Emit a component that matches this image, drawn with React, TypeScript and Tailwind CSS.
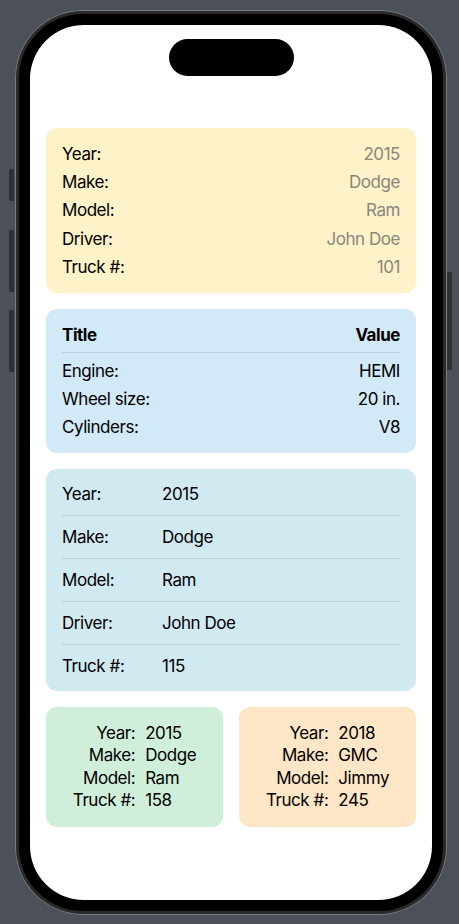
import React from "react";

const truck = [
  { label: "Year:", value: "2015" },
  { label: "Make:", value: "Dodge" },
  { label: "Model:", value: "Ram" },
  { label: "Driver:", value: "John Doe" },
  { label: "Truck #:", value: "101" },
];

const specs = [
  { label: "Engine:", value: "HEMI" },
  { label: "Wheel size:", value: "20 in." },
  { label: "Cylinders:", value: "V8" },
];

const listRows = [
  { label: "Year:", value: "2015" },
  { label: "Make:", value: "Dodge" },
  { label: "Model:", value: "Ram" },
  { label: "Driver:", value: "John Doe" },
  { label: "Truck #:", value: "115" },
];

const smallCards = [
  {
    bg: "bg-[#d0efda]",
    rows: [
      ["Year:", "2015"],
      ["Make:", "Dodge"],
      ["Model:", "Ram"],
      ["Truck #:", "158"],
    ],
  },
  {
    bg: "bg-[#fee6c6]",
    rows: [
      ["Year:", "2018"],
      ["Make:", "GMC"],
      ["Model:", "Jimmy"],
      ["Truck #:", "245"],
    ],
  },
];

export default function App() {
  return (
    <div
      className="w-[459px] h-[924px] bg-[#4c5058] pt-[10px] pl-[15px] overflow-hidden text-black"
      style={{ fontFamily: "Inter, 'Noto Sans', sans-serif" }}>
      {/* Phone body */}
      <div className="relative w-[432px] h-[905px] rounded-[68px] bg-[#2a2a2c] p-[4px] shadow-[inset_0_0_0_1px_#7a7d83]">
        {/* Side buttons */}
        <div className="absolute -left-[6px] top-[159px] w-[5px] h-[32px] rounded-l-[2px] bg-[#2e3034]" />
        <div className="absolute -left-[6px] top-[220px] w-[5px] h-[62px] rounded-l-[2px] bg-[#2e3034]" />
        <div className="absolute -left-[6px] top-[300px] w-[5px] h-[62px] rounded-l-[2px] bg-[#2e3034]" />
        <div className="absolute -right-[5px] top-[262px] w-[5px] h-[98px] rounded-r-[2px] bg-[#2e3034]" />

        <div className="w-full h-full rounded-[64px] bg-black p-[11px]">
          {/* Screen */}
          <div className="w-full h-full rounded-[54px] bg-white overflow-hidden flex flex-col items-center pt-[14px] px-4">
            {/* Dynamic Island */}
            <div className="w-[125px] h-[37px] rounded-full bg-black shrink-0" />

            <div className="w-full mt-[52px] flex flex-col gap-4 text-[17px] tracking-[-0.45px]">
              {/* Yellow card */}
              <div className="rounded-[11px] bg-[#fef2c8] px-4 py-3">
                {truck.map((r) => (
                  <div key={r.label} className="flex justify-between leading-[28.2px]">
                    <span>{r.label}</span>
                    <span className="text-[#8a877d]">{r.value}</span>
                  </div>
                ))}
              </div>

              {/* Spec table */}
              <div className="rounded-[11px] bg-[#d2e9f7] px-4 py-3">
                <div className="flex justify-between leading-[28px] font-bold">
                  <span>Title</span>
                  <span>Value</span>
                </div>
                <div className="mt-[3px] mb-[4px] h-px bg-black/10" />
                {specs.map((r) => (
                  <div key={r.label} className="flex justify-between leading-[28px]">
                    <span>{r.label}</span>
                    <span>{r.value}</span>
                  </div>
                ))}
              </div>

              {/* List card */}
              <div className="rounded-[11px] bg-[#d1e9f1] px-4 py-1">
                {listRows.map((r, i) => (
                  <div
                    key={r.label}
                    className={
                      "flex items-center pt-[2px] " +
                      (i < listRows.length - 1 ? "h-[43px] border-b border-black/10" : "h-[42px]")
                    }>
                    <span className="w-[100px]">{r.label}</span>
                    <span>{r.value}</span>
                  </div>
                ))}
              </div>

              {/* Small cards */}
              <div className="grid grid-cols-2 gap-4">
                {smallCards.map((c, i) => (
                  <div key={i} className={"rounded-[11px] py-[15px] flex justify-center " + c.bg}>
                    <div className="grid grid-cols-[auto_auto] gap-x-[10px] leading-[22.4px]">
                      {c.rows.map(([l, v]) => (
                        <React.Fragment key={l}>
                          <span className="text-right">{l}</span>
                          <span>{v}</span>
                        </React.Fragment>
                      ))}
                    </div>
                  </div>
                ))}
              </div>
            </div>
          </div>
        </div>
      </div>
    </div>
  );
}
